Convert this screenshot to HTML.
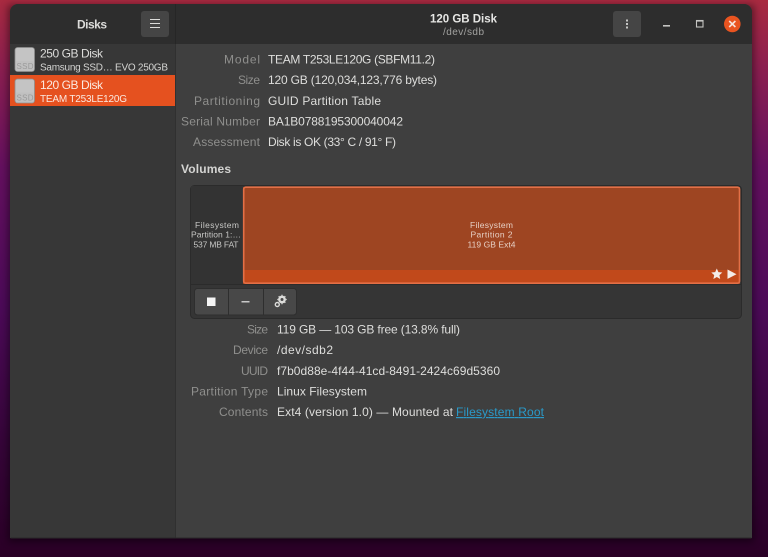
<!DOCTYPE html>
<html><head><meta charset="utf-8">
<style>
html,body{margin:0;padding:0;width:768px;height:557px;overflow:hidden;background:#2c0028}
svg{display:block;position:absolute;left:0;top:0;filter:blur(.3px)}
text{font-family:"Liberation Sans","DejaVu Sans",sans-serif;font-size:12px;white-space:pre}
.l{fill:#8f8f8d}.v{fill:#dededc}
.s{font-size:8.5px;fill:#c8c8c6;text-anchor:middle}
</style></head><body>
<svg width="768" height="557" viewBox="0 0 768 557" xmlns="http://www.w3.org/2000/svg">
<defs>
<linearGradient id="bg" x1="0" y1="0" x2="0" y2="1">
<stop offset="0" stop-color="#a82a40"/><stop offset=".12" stop-color="#8c1f50"/><stop offset=".3" stop-color="#64105f"/><stop offset=".55" stop-color="#4c0a58"/><stop offset=".8" stop-color="#350538"/><stop offset="1" stop-color="#2a0026"/>
</linearGradient>
<filter id="sh" x="-5%" y="-5%" width="110%" height="110%"><feGaussianBlur stdDeviation="4"/></filter>
<clipPath id="win"><path d="M10 12a8 8 0 0 1 8-8H744a8 8 0 0 1 8 8V538H10Z"/></clipPath>
</defs>
<rect width="768" height="557" fill="url(#bg)"/>
<rect x="8" y="5" width="746" height="537" fill="#000" opacity=".45" filter="url(#sh)"/>
<g clip-path="url(#win)">
<rect x="10" y="4" width="742" height="534" fill="#3f3f3f"/>
<rect x="10" y="44" width="165" height="494" fill="#373737"/>
<rect x="175" y="44" width="1" height="494" fill="#303030"/>
<rect x="10" y="4" width="742" height="40" fill="#2d2d2d"/>
<rect x="175" y="4" width="1" height="40" fill="#262626"/>
<rect x="10" y="75" width="165" height="31" fill="#e5511f"/>
</g>
<rect x="10.5" y="537.5" width="741" height="1" fill="#2a2a2a"/>

<!-- header -->
<text x="77" y="28.5" textLength="30" font-weight="700" fill="#dcdcda">Disks</text>
<rect x="141" y="11" width="28" height="26" rx="3" fill="#454545"/>
<path d="M150 19.5h10M150 23.5h10M150 27.5h10" stroke="#dcdcda" stroke-width="1.1"/>
<text x="430" y="22.5" textLength="67" font-weight="700" style="font-size:11.5px" fill="#e6e6e4">120 GB Disk</text>
<text x="443" y="35" textLength="41" style="font-size:10px" fill="#a2a2a0">/dev/sdb</text>
<rect x="613" y="11" width="28" height="26" rx="3" fill="#454545"/>
<path d="M627 19.5v2M627 23v2M627 26.5v2" stroke="#dcdcda" stroke-width="1.7"/>
<rect x="663" y="25" width="7" height="1.6" fill="#c4c4c2"/>
<rect x="696.5" y="20.5" width="6.5" height="6.5" fill="none" stroke="#c4c4c2" stroke-width="1.1"/>
<rect x="696.5" y="20" width="6.5" height="1.6" fill="#c4c4c2"/>
<circle cx="732.3" cy="24" r="8.3" fill="#e95420"/>
<path d="M729.2 21l6.2 6M735.4 21l-6.2 6" stroke="#f6e4dc" stroke-width="1.6"/>

<!-- sidebar -->
<g>
<rect x="15" y="47.5" width="19.5" height="24" rx="2.5" fill="#c4c4c4" stroke="#8e8e8e" stroke-width=".8"/>
<rect x="16" y="61" width="17.5" height="10" fill="#c0c0c0"/>
<text x="25" y="69" text-anchor="middle" textLength="17" style="font-size:8px" fill="#9a9a9a">SSD</text>
<text x="40" y="57.5" textLength="63" style="font-size:12px" fill="#dcdcda">250 GB Disk</text>
<text x="40" y="70.5" textLength="128" style="font-size:10px" fill="#d4d4d2">Samsung SSD… EVO 250GB</text>
<rect x="15" y="79" width="19.5" height="24" rx="2.5" fill="#c4c4c4" stroke="#8e8e8e" stroke-width=".8"/>
<rect x="16" y="92.5" width="17.5" height="10" fill="#c0c0c0"/>
<text x="25" y="100.5" text-anchor="middle" textLength="17" style="font-size:8px" fill="#9a9a9a">SSD</text>
<text x="40" y="89" textLength="63" style="font-size:12px" fill="#fbe9e0">120 GB Disk</text>
<text x="40" y="102" textLength="87" style="font-size:10px" fill="#fbe9e0">TEAM T253LE120G</text>
</g>

<!-- drive info -->
<text class="l" x="224" y="63.5" textLength="36">Model</text>
<text class="l" x="238" y="84" textLength="22">Size</text>
<text class="l" x="194" y="105" textLength="66">Partitioning</text>
<text class="l" x="181" y="125.5" textLength="79">Serial Number</text>
<text class="l" x="193" y="146" textLength="67">Assessment</text>
<text class="v" x="268" y="63.5" textLength="167">TEAM T253LE120G (SBFM11.2)</text>
<text class="v" x="268" y="84" textLength="169">120 GB (120,034,123,776 bytes)</text>
<text class="v" x="268" y="105" textLength="113">GUID Partition Table</text>
<text class="v" x="268" y="125.5" textLength="135">BA1B0788195300040042</text>
<text class="v" x="268" y="146" textLength="128">Disk is OK (33° C / 91° F)</text>

<text x="181" y="173" textLength="50" font-weight="700" fill="#d4d4d2">Volumes</text>

<!-- volumes -->
<rect x="190.5" y="185.5" width="551" height="133" rx="4" fill="#353535" stroke="#2b2b2b"/>
<rect x="191" y="186" width="51" height="98" fill="#333"/>
<rect x="191" y="284" width="550" height="1" fill="#2b2b2b"/>
<rect x="243" y="187" width="497" height="97" fill="#9e4522"/>
<rect x="244" y="270" width="495" height="13" fill="#c1491b"/>
<rect x="243.7" y="187.2" width="495.8" height="96" rx="2" fill="none" stroke="#e36f46" stroke-width="1.6"/>
<text class="s" x="217" y="228" textLength="44">Filesystem</text>
<text class="s" x="216" y="237.5" textLength="50">Partition 1:…</text>
<text class="s" x="216" y="247.5" textLength="45">537 MB FAT</text>
<text class="s" x="491.5" y="228" textLength="43" style="fill:#e6cfc4">Filesystem</text>
<text class="s" x="491.5" y="237.5" textLength="42" style="fill:#e6cfc4">Partition 2</text>
<text class="s" x="491.5" y="247.5" textLength="48" style="fill:#e6cfc4">119 GB Ext4</text>
<path d="M716.8 268.5l1.6 3.6 3.9.4-2.9 2.6.8 3.9-3.4-2-3.4 2 .8-3.9-2.9-2.6 3.9-.4z" fill="#f4ece8"/>
<path d="M727.5 269.5l9 4.7-9 4.7z" fill="#f4ece8"/>

<!-- toolbar -->
<rect x="194.5" y="288.5" width="102" height="26.5" rx="3" fill="#484848" stroke="#2e2e2e"/>
<rect x="228" y="289" width="1" height="26" fill="#2e2e2e"/>
<rect x="263" y="289" width="1" height="26" fill="#2e2e2e"/>
<rect x="207" y="297.5" width="8.5" height="8.5" fill="#f4f4f4"/>
<rect x="241.5" y="301" width="8" height="1.5" fill="#c8c8c8"/>
<g fill="none" stroke="#dcdcda">
<circle cx="282" cy="299.5" r="2.7" stroke-width="2.4"/>
<path d="M282 294.8v1M282 303.2v1M277.3 299.5h1M285.7 299.5h1M278.7 296.2l.7.7M284.6 302.1l.7.7M285.3 296.2l-.7.7" stroke-width="1.3"/>
<circle cx="277.3" cy="304.5" r="2" stroke-width="1.4"/>
</g>

<!-- partition info -->
<text class="l" x="247" y="333.5" textLength="21">Size</text>
<text class="l" x="233" y="354" textLength="35">Device</text>
<text class="l" x="241" y="375" textLength="27">UUID</text>
<text class="l" x="191" y="395.5" textLength="77">Partition Type</text>
<text class="l" x="219" y="416" textLength="49">Contents</text>
<text class="v" x="277" y="333.5" textLength="183">119 GB — 103 GB free (13.8% full)</text>
<text class="v" x="277" y="354" textLength="56">/dev/sdb2</text>
<text class="v" x="277" y="375" textLength="223">f7b0d88e-4f44-41cd-8491-2424c69d5360</text>
<text class="v" x="277" y="395.5" textLength="90">Linux Filesystem</text>
<text class="v" x="277" y="416" textLength="176">Ext4 (version 1.0) — Mounted at</text>
<text x="456" y="416" textLength="88" fill="#2a9ac9" text-decoration="underline">Filesystem Root</text>
</svg>
</body></html>
